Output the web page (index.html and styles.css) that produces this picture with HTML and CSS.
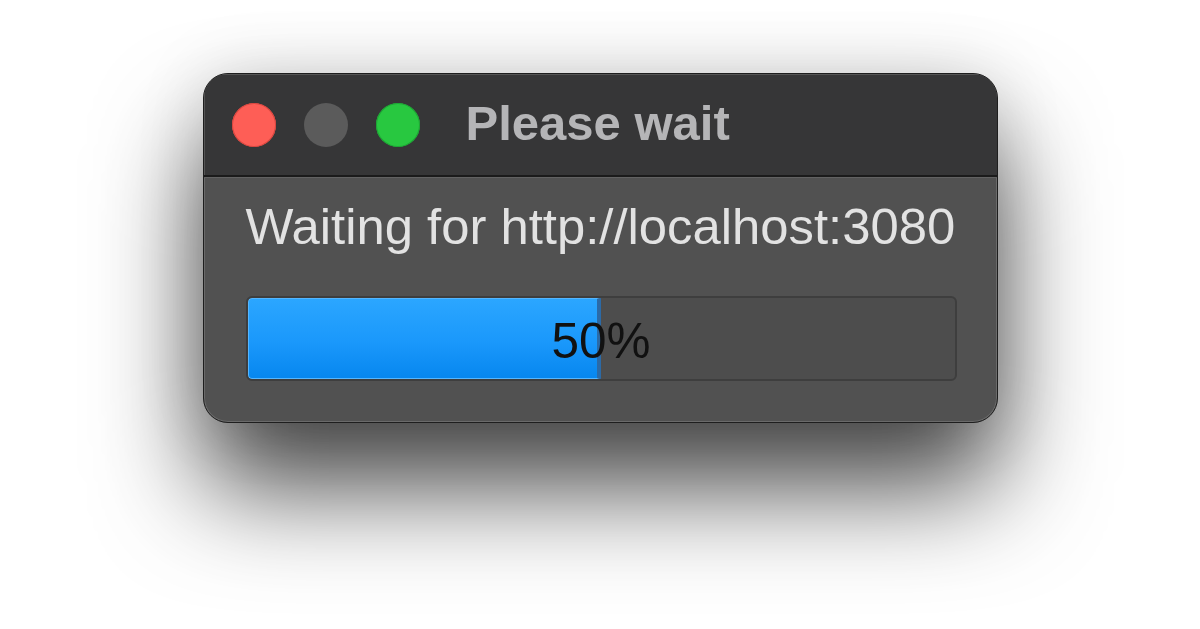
FILE: index.html
```html
<!DOCTYPE html>
<html>
<head>
<meta charset="utf-8">
<link rel="stylesheet" href="styles.css">
</head>
<body>
<div class="window">
  <div class="titlebar">
    <div class="lights">
      <span class="light red"></span>
      <span class="light gray"></span>
      <span class="light green"></span>
    </div>
    <div class="title">Please wait</div>
  </div>
  <div class="content">
    <div class="message">Waiting for http://localhost:3080</div>
    <div class="progress">
      <div class="fill" style="width: 50%"></div>
      <div class="label">50%</div>
    </div>
  </div>
</div>
</body>
</html>
```
FILE: styles.css
```css
html, body {
  margin: 0;
  padding: 0;
  background: #ffffff;
}
body {
  width: 1200px;
  height: 629px;
  overflow: hidden;
  display: flex;
  justify-content: center;
  align-items: flex-start;
  padding-top: 73px;
  box-sizing: border-box;
  font-family: "Liberation Sans", Arial, sans-serif;
}
.window {
  width: 795px;
  height: 350px;
  box-sizing: border-box;
  border: 1px solid #1e1e1e;
  border-radius: 25px;
  overflow: hidden;
  background: #515151;
  box-shadow: inset 0 0 0 1px #6a6a6a, 0 65px 105px 0 rgba(0,0,0,0.72), 0 0 70px rgba(0,0,0,0.12);
  display: flex;
  flex-direction: column;
}
.titlebar {
  height: 101px;
  flex: none;
  background: #363637;
  border-bottom: 2px solid #1b1b1b;
  display: flex;
  align-items: center;
  padding-left: 28px;
  box-shadow: inset 1px 1px 0 #555;
}
.lights {
  display: flex;
  gap: 28px;
}
.light {
  width: 44px;
  height: 44px;
  border-radius: 50%;
  display: block;
}
.red { background: #fe5e56; box-shadow: inset 0 0 0 1px #d9463f; }
.gray { background: #5b5b5b; }
.green { background: #28c840; box-shadow: inset 0 0 0 1px #1ea535; }
.title {
  margin-left: 46px;
  font-size: 49px;
  font-weight: bold;
  color: #b5b5b7;
  line-height: 56px;
  margin-top: -3px;
}
.content {
  flex: 1;
  padding: 20px 40px 0 42px;
  border-top: 1px solid #626262;
}
.message {
  font-size: 50.8px;
  line-height: 58px;
  color: #e2e2e2;
  white-space: nowrap;
}
.progress {
  margin-top: 40px;
  height: 85px;
  box-sizing: border-box;
  border: 2px solid #3e3e3e;
  border-radius: 6px;
  background: #4d4d4d;
  position: relative;
  display: flex;
  overflow: hidden;
}
.fill {
  height: 100%;
  box-sizing: border-box;
  background: linear-gradient(#2ba6ff, #1a98fb 55%, #0787ef);
  border: 1px solid #55b6ff;
  border-right: 4px solid #2c6aa6;
  border-radius: 4px 0 0 4px;
}
.label {
  position: absolute;
  inset: 0;
  display: flex;
  align-items: center;
  justify-content: center;
  font-size: 49.5px;
  color: #111111;
  padding-top: 4px;
}
```
